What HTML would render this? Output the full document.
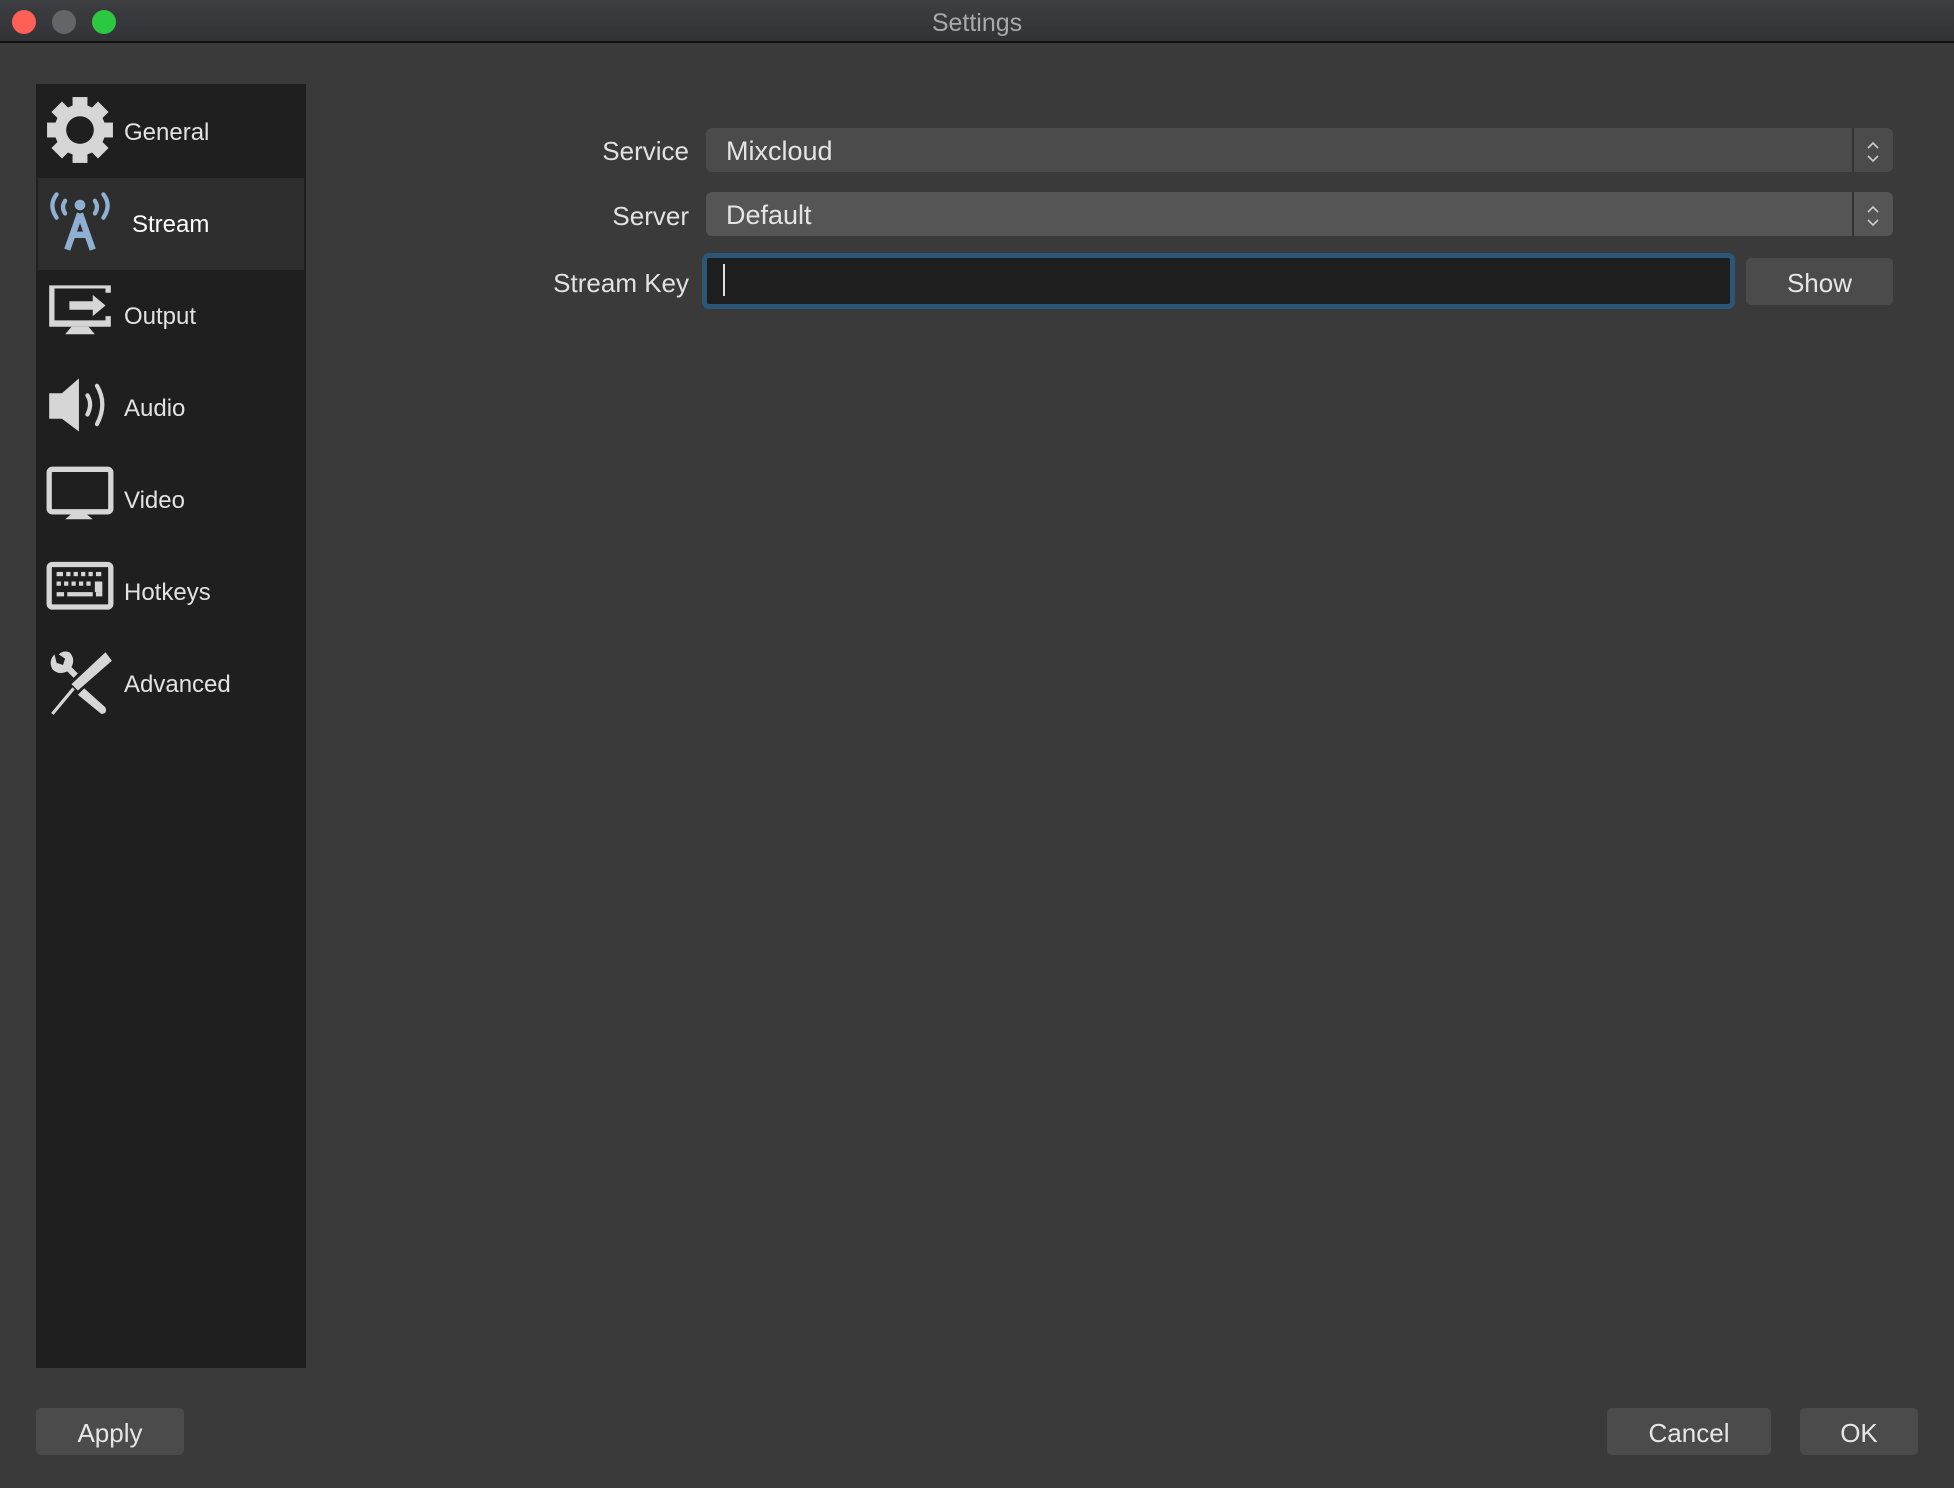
<!DOCTYPE html>
<html><head><meta charset="utf-8"><style>
*{margin:0;padding:0;box-sizing:border-box}
body{width:1954px;height:1488px;background:#3a3a3a;font-family:"Liberation Sans",sans-serif;color:#e4e4e4;position:relative;overflow:hidden}
.abs{position:absolute}
.title{left:0;top:0;width:1954px;height:43px;background:linear-gradient(#3d3e42,#323337);border-bottom:2px solid #111}
.dot{width:24px;height:24px;border-radius:50%;top:10px}
.side{left:36px;top:84px;width:270px;height:1284px;background:#1f1f1f}
.item{position:absolute;left:0;width:270px;height:92px}
.item svg{position:absolute;left:10px;top:12px}
.item span{position:absolute;left:88px;top:35px;font-size:24px;color:#e2e2e2}
.lbl{font-size:26px;text-align:right;width:300px;color:#e2e2e2}
.combo{border-radius:6px;height:44px}
.btn{background:#4b4b4b;border-radius:5px;font-size:26px;text-align:center;color:#e6e6e6}
</style></head><body>
<div class="abs title"></div>
<div class="abs dot" style="left:12px;background:#fe5f57"></div>
<div class="abs dot" style="left:52px;background:#646569"></div>
<div class="abs dot" style="left:92px;background:#2bc840"></div>
<div class="abs" style="left:0;width:1954px;top:9px;text-align:center;font-size:25px;color:#a9a9ab">Settings</div>

<div class="abs side">
 <div class="item" style="left:2px;width:266px;height:92px;top:94px;background:#2e2e2e"></div>
 <div class="item" style="top:0">
  <svg width="68" height="68" viewBox="0 0 64 64"><g fill="#d6d6d6"><circle cx="32" cy="32" r="24"/><g id="t"><rect x="25" y="1" width="14" height="14"/></g><use href="#t" transform="rotate(45 32 32)"/><use href="#t" transform="rotate(90 32 32)"/><use href="#t" transform="rotate(135 32 32)"/><use href="#t" transform="rotate(180 32 32)"/><use href="#t" transform="rotate(225 32 32)"/><use href="#t" transform="rotate(270 32 32)"/><use href="#t" transform="rotate(315 32 32)"/></g><circle cx="32" cy="32" r="13" fill="#1f1f1f"/></svg>
  <span>General</span></div>
 <div class="item" style="top:92px">
  <svg width="68" height="68" viewBox="0 0 64 64" fill="none" stroke="#8fb0d2" stroke-width="4" stroke-linecap="round"><path d="M10 6Q2 16 10 28M18 12Q14 18 18 24M54 6Q62 16 54 28M46 12Q50 18 46 24"/><circle cx="32" cy="16" r="5" fill="#8fb0d2" stroke="none"/><path d="M32 24L20 58M32 24L44 58M25 44H39" stroke-width="6" stroke-linecap="butt"/></svg>
  <span style="left:96px;color:#fff">Stream</span></div>
 <div class="item" style="top:184px">
  <svg width="68" height="68" viewBox="0 0 64 64"><path d="M3 5H61V12H56V8H8V38H56V34H61V44H3Z" fill="#d6d6d6"/><path d="M22 20H44V14L56 24L44 34V28H22Z" fill="#d6d6d6"/><path d="M24 44H40L46 51H18Z" fill="#d6d6d6"/></svg>
  <span>Output</span></div>
 <div class="item" style="top:276px">
  <svg width="68" height="68" viewBox="0 0 64 64"><path d="M3 20H15L31 6V56L15 44H3Z" fill="#d6d6d6"/><path d="M39 22Q44 30 39 40M48 13Q58 30 48 49" stroke="#d6d6d6" stroke-width="4" fill="none" stroke-linecap="round"/></svg>
  <span>Audio</span></div>
 <div class="item" style="top:368px">
  <svg width="68" height="68" viewBox="0 0 64 64"><rect x="3" y="5" width="58" height="40" rx="3" fill="none" stroke="#d6d6d6" stroke-width="5"/><path d="M24 47H38L44 52H18Z" fill="#d6d6d6"/></svg>
  <span>Video</span></div>
 <div class="item" style="top:460px">
  <svg width="68" height="68" viewBox="0 0 64 64"><rect x="3" y="8" width="58" height="40" rx="3" fill="none" stroke="#d6d6d6" stroke-width="5"/><g fill="#d6d6d6"><rect x="10" y="15" width="6" height="4"/><rect x="19" y="15" width="4" height="4"/><rect x="26" y="15" width="4" height="4"/><rect x="33" y="15" width="4" height="4"/><rect x="40" y="15" width="4" height="4"/><rect x="47" y="15" width="5" height="4"/><rect x="10" y="24" width="4" height="4"/><rect x="17" y="24" width="4" height="4"/><rect x="24" y="24" width="4" height="4"/><rect x="31" y="24" width="4" height="4"/><rect x="38" y="24" width="4" height="4"/><rect x="46" y="24" width="7" height="10"/><rect x="10" y="34" width="7" height="4"/><rect x="20" y="34" width="24" height="4"/><rect x="47" y="34" width="6" height="4"/></g></svg>
  <span>Hotkeys</span></div>
 <div class="item" style="top:552px">
  <svg width="68" height="68" viewBox="0 0 64 64"><path d="M8 6Q2 12 6 20Q12 26 20 22L26 28L30 24L24 18Q28 10 22 4Q16 2 12 6L18 10L16 16L10 14Z" fill="#d6d6d6"/><path d="M56 4L62 12L30 40L24 34Z" fill="#d6d6d6"/><path d="M26 38L6 62" stroke="#d6d6d6" stroke-width="3"/><path d="M36 38L56 56Q58 62 52 62L30 44Z" fill="#d6d6d6"/></svg>
  <span>Advanced</span></div>
</div>

<div class="abs lbl" style="left:389px;top:136px">Service</div>
<div class="abs lbl" style="left:389px;top:201px">Server</div>
<div class="abs lbl" style="left:389px;top:268px">Stream Key</div>

<div class="abs combo" style="left:706px;top:128px;width:1187px;background:#4b4b4b"></div>
<div class="abs" style="left:1852px;top:128px;width:2px;height:44px;background:#333"></div>
<div class="abs" style="left:726px;top:136px;font-size:27px">Mixcloud</div>
<div class="abs combo" style="left:706px;top:192px;width:1187px;background:#555"></div>
<div class="abs" style="left:1852px;top:192px;width:2px;height:44px;background:#333"></div>
<div class="abs" style="left:726px;top:200px;font-size:27px">Default</div>
<svg class="abs" style="left:1865px;top:138px" width="16" height="90" viewBox="0 0 16 90" fill="none" stroke="#ccc" stroke-width="1.6"><path d="M3 10L8 5L13 10M3 18L8 23L13 18M3 74L8 69L13 74M3 82L8 87L13 82"/></svg>

<div class="abs" style="left:702px;top:253px;width:1033px;height:56px;border:5px solid #2c5677;border-radius:7px;background:#1e1e1e"></div>
<div class="abs" style="left:723px;top:264px;width:2px;height:32px;background:#ddd"></div>
<div class="abs btn" style="left:1746px;top:258px;width:147px;height:47px;line-height:50px">Show</div>

<div class="abs btn" style="left:36px;top:1408px;width:148px;height:47px;line-height:50px">Apply</div>
<div class="abs btn" style="left:1607px;top:1408px;width:164px;height:47px;line-height:50px">Cancel</div>
<div class="abs btn" style="left:1800px;top:1408px;width:118px;height:47px;line-height:50px">OK</div>
</body></html>
